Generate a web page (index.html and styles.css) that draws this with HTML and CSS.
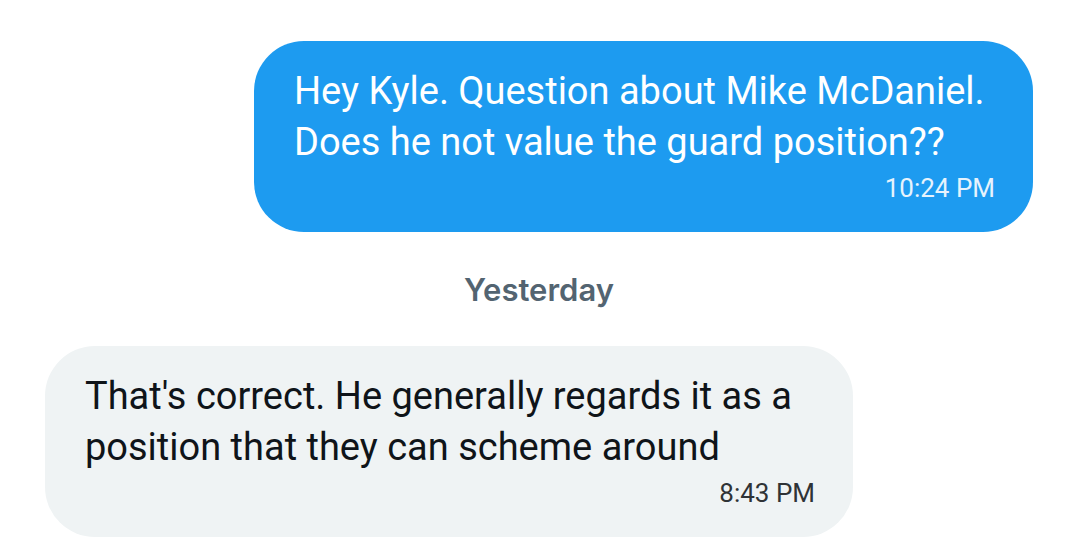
FILE: index.html
```html
<!DOCTYPE html>
<html lang="en">
<head>
<meta charset="utf-8">
<title>Messages</title>
<link rel="stylesheet" href="styles.css">
</head>
<body>
<main class="thread">
  <div class="row row-sent">
    <div class="bubble bubble-sent">
      <p class="msg-text">Hey Kyle. Question about Mike McDaniel.<br>Does he not value the guard position??</p>
      <div class="msg-time">10:24 PM</div>
    </div>
  </div>
  <div class="day-sep">Yesterday</div>
  <div class="row row-recv">
    <div class="bubble bubble-recv">
      <p class="msg-text">That's correct. He generally regards it as a<br>position that they can scheme around</p>
      <div class="msg-time">8:43 PM</div>
    </div>
  </div>
</main>
</body>
</html>
```
FILE: styles.css
```css
html, body {
  margin: 0;
  padding: 0;
  background: #ffffff;
}
body {
  width: 1080px;
  height: 549px;
  overflow: hidden;
  font-family: Roboto, "Liberation Sans", sans-serif;
}
.thread {
  display: flex;
  flex-direction: column;
  padding: 41px 47px 0 45px;
}
.row {
  display: flex;
}
.row-sent {
  justify-content: flex-end;
}
.row-recv {
  justify-content: flex-start;
}
.bubble {
  box-sizing: border-box;
  height: 191px;
  border-radius: 50px;
  padding: 25px 38px 0 40px;
  display: flex;
  flex-direction: column;
}
.bubble-sent {
  width: 779px;
  background: #1d9bf0;
  color: #ffffff;
}
.bubble-recv {
  width: 808px;
  background: #eff3f4;
  color: #0f1419;
}
.msg-text {
  margin: 0;
  font-size: 38px;
  line-height: 51px;
  font-weight: 400;
  white-space: nowrap;
}
.msg-time {
  margin-top: 5px;
  align-self: flex-end;
  font-family: Roboto, "Liberation Sans", sans-serif;
  font-size: 26px;
  line-height: 30px;
}
.bubble-sent .msg-time {
  color: #e6f3fd;
}
.bubble-recv .msg-time {
  color: #2f3336;
}
.day-sep {
  font-family: Inter, Roboto, sans-serif;
  text-align: center;
  color: #536471;
  font-size: 31px;
  font-weight: 600;
  line-height: 36px;
  margin: 40px 0 38px;
}
```
